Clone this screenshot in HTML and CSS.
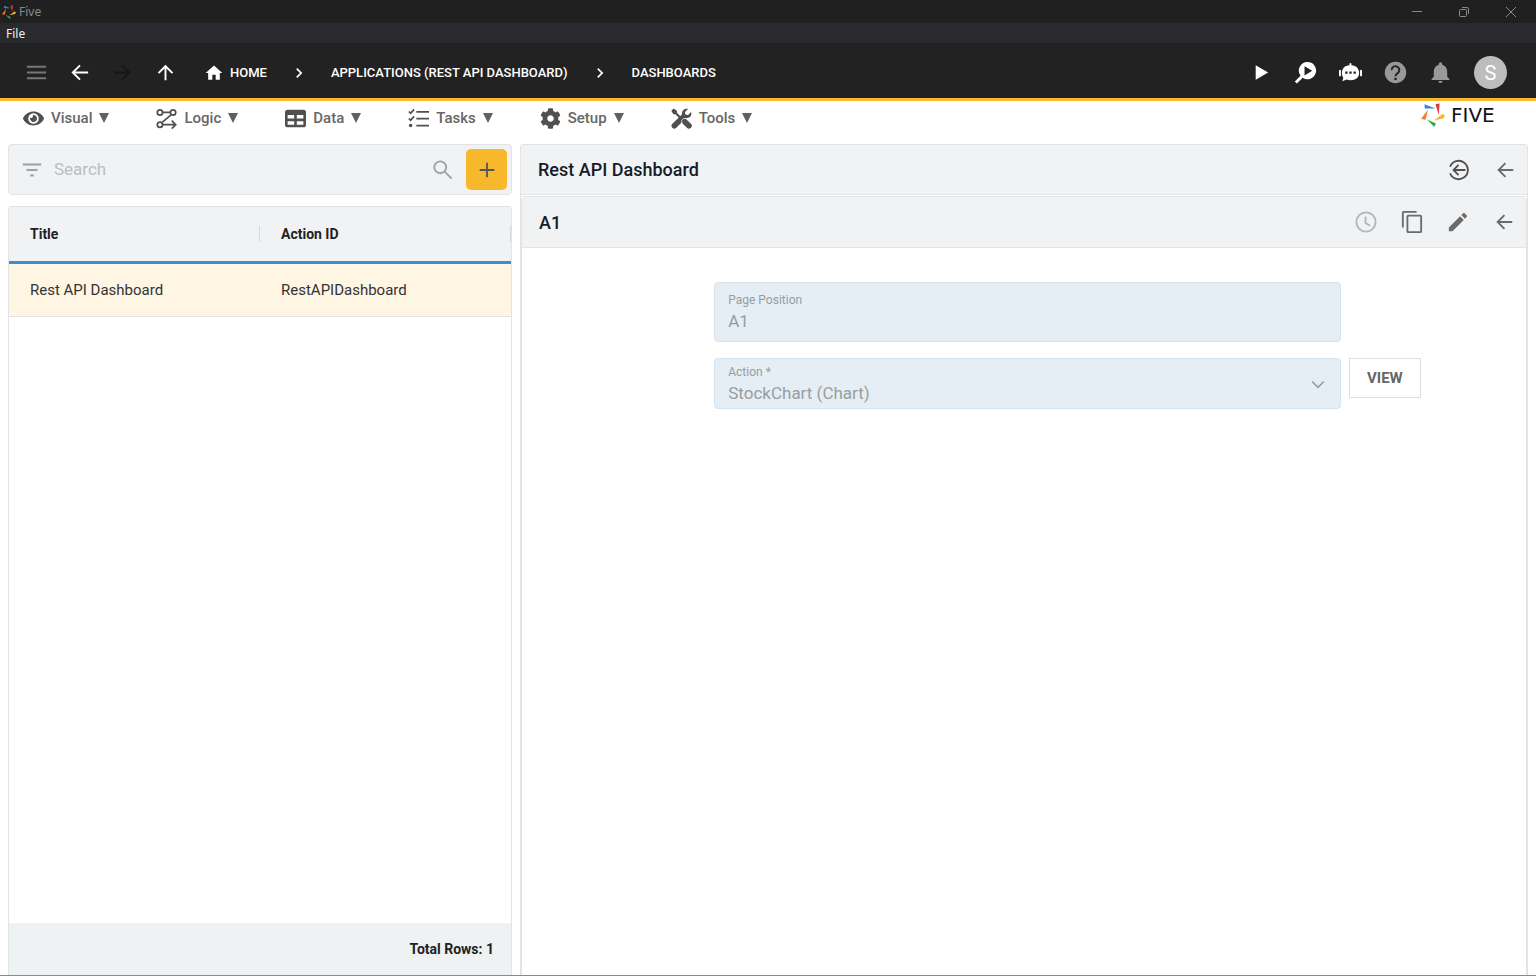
FILE: index.html
```
<!DOCTYPE html>
<html lang="en">
<head>
    <meta charset="UTF-8">
    <meta name="viewport" content="width=device-width, initial-scale=1.0">
    <title>Five</title>
    <link rel="stylesheet" href="styles.css">
</head>
<body>

<!-- Shared shapes -->
<svg class="sprite" aria-hidden="true">
    <symbol id="star" viewBox="0 0 24 24">
        <path fill="#3f83d9" d="M3.5 1.2 14.500 5.500H3.800z"/>
        <path fill="#e5343d" d="M14.500 1.200 18.600.4 17.800 12z"/>
        <path fill="#f8b62b" d="M24 12.500 22.200 15.500 12.800 17.500 21.500 11z"/>
        <path fill="#35a853" d="M6 16.500 15 20.500 13.200 24z"/>
        <path fill="#f47c2a" d="M7 6.500 4.500 16.800 0 16z"/>
    </symbol>
    <symbol id="arrow-left" viewBox="0 0 24 24">
        <path fill="none" stroke="currentColor" stroke-width="2" d="M21 12H5M12.500 4.500 5 12l7.500 7.500"/>
    </symbol>
</svg>

<!-- Window title -->
<div class="titlebar">
    <svg class="titlebar-logo"><use href="#star"/></svg>
    <span class="titlebar-name">Five</span>
    <div class="window-buttons">
        <button aria-label="Minimize"><svg viewBox="0 0 12 12"><path d="M1 5.500h10"/></svg></button>
        <button aria-label="Restore"><svg viewBox="0 0 12 12"><rect x="1.5" y="3.5" width="7" height="7" rx="1"/><path d="M4 1.500h5a1.500 1.500 0 0 1 1.500 1.500v5"/></svg></button>
        <button aria-label="Close"><svg viewBox="0 0 12 12"><path d="M1 1l10 10M11 1 1 11"/></svg></button>
    </div>
</div>
<div class="filebar"><button>File</button></div>

<!-- Main toolbar -->
<header class="toolbar">
    <div class="nav-buttons">
        <button class="dim" aria-label="Menu"><svg viewBox="0 0 24 24"><path d="M2 5h20v2H2zM2 11h20v2H2zM2 17h20v2H2z"/></svg></button>
        <button aria-label="Back"><svg><use href="#arrow-left"/></svg></button>
        <button class="off" aria-label="Forward" disabled><svg class="flip"><use href="#arrow-left"/></svg></button>
        <button aria-label="Up"><svg viewBox="0 0 24 24"><path d="M4 12l1.410 1.410L11 7.830V20h2V7.830l5.580 5.590L20 12l-8-8-8 8z"/></svg></button>
    </div>
    <nav class="breadcrumbs">
        <a href="#"><svg viewBox="0 0 24 24"><path d="M10 20v-6h4v6h5v-8h3L12 3 2 12h3v8z"/></svg>HOME</a>
        <svg class="sep" viewBox="0 0 24 24"><path d="M10 6 8.590 7.410 13.170 12l-4.580 4.590L10 18l6-6z"/></svg>
        <a href="#">APPLICATIONS (REST API DASHBOARD)</a>
        <svg class="sep" viewBox="0 0 24 24"><path d="M10 6 8.590 7.410 13.170 12l-4.580 4.590L10 18l6-6z"/></svg>
        <a href="#">DASHBOARDS</a>
    </nav>
    <div class="tool-buttons">
        <button aria-label="Run"><svg viewBox="0 0 24 24"><path d="M7 4.500v15L20 12z"/></svg></button>
        <button aria-label="Inspect"><svg viewBox="0 0 24 24"><path fill-rule="evenodd" d="M14 1a9 9 0 1 1-4.900 16.500L3 23.500.8 21.300l6-6A9 9 0 0 1 14 1zm-3 4.500v9.500l8-4.700z"/></svg></button>
        <button aria-label="Assistant"><svg viewBox="0 0 24 24"><path fill-rule="evenodd" d="M11 4.500V3a1 1 0 0 1 2 0v1.500c5 .2 8 3.500 8 8s-3.500 7.500-9 7.500c-1.500 0-2.800-.2-4-.7L3.500 21l1-3.500C3.500 16 3 14.500 3 12.500c0-4.500 3-7.800 8-8zM6.500 11v2.400h2.400V11zm4.300 0v2.400h2.400V11zm4.300 0v2.400h2.400V11z"/><rect y="9" width="2" height="7" rx="1"/><rect x="22" y="9" width="2" height="7" rx="1"/></svg></button>
        <button class="soft" aria-label="Help"><svg viewBox="0 0 24 24"><path d="M12 .8a11.200 11.200 0 1 0 0 22.400 11.200 11.200 0 0 0 0-22.400z"/><path class="mark" d="M8 9.500a4 4 0 1 1 6.500 3c-1.500 1.200-2.500 1.800-2.500 3.500"/><path class="dot" d="M10.800 17.500h2.400v2.400h-2.400z"/></svg></button>
        <button class="soft" aria-label="Notifications"><svg viewBox="0 0 24 24"><path d="M12 23a2.200 2.200 0 0 0 2.200-2.200H9.800A2.200 2.200 0 0 0 12 23zm7-6.500V11c0-3.400-1.900-6.200-5.200-7V3.200a1.800 1.800 0 0 0-3.600 0V4C6.900 4.800 5 7.600 5 11v5.500l-2.300 2.200v1.100h18.600v-1.100z"/></svg></button>
        <button class="avatar">S</button>
    </div>
</header>

<!-- Menu -->
<nav class="menu">
    <button><svg viewBox="0 0 576 512"><path d="M572.520 241.400C518.290 135.590 410.930 64 288 64S57.680 135.640 3.480 241.410a32.350 32.350 0 0 0 0 29.190C57.710 376.410 165.070 448 288 448s230.320-71.640 284.520-177.410a32.350 32.350 0 0 0 0-29.190zM288 400a144 144 0 1 1 144-144 143.930 143.930 0 0 1-144 144zm0-240a95.310 95.310 0 0 0-25.310 3.790 47.850 47.850 0 0 1-66.900 66.900A95.780 95.780 0 1 0 288 160z"/></svg>Visual<i></i></button>
    <button><svg class="line" viewBox="0 0 24 24"><circle cx="4.500" cy="5" r="3"/><circle cx="19.500" cy="5" r="3"/><circle cx="4.500" cy="19" r="3"/><path d="M7.500 5h9M17.500 7.500 7 16.500M7.500 19H22M18 14.500l4.500 4.500-4.500 4.500"/></svg>Logic<i></i></button>
    <button><svg viewBox="0 0 24 24"><path fill-rule="evenodd" d="M3 2h18a3 3 0 0 1 3 3v14a3 3 0 0 1-3 3H3a3 3 0 0 1-3-3V5a3 3 0 0 1 3-3zm0 6v4h7.500V8zm10.500 0v4H21V8zM3 15v4h7.500v-4zm10.500 0v4H21v-4z"/></svg>Data<i></i></button>
    <button><svg class="line" viewBox="0 0 24 24"><path d="M9.500 4.500H24M9.500 12H24M9.500 20H24M1 4l2 2 4-4.500M1 12l2 2 4-4.500"/><circle class="dot" cx="3" cy="20" r="2"/></svg>Tasks<i></i></button>
    <button><svg viewBox="0 0 512 512"><path d="M487.400 315.700l-42.600-24.600c4.300-23.200 4.300-47 0-70.200l42.600-24.600c4.900-2.800 7.100-8.600 5.500-14-11.100-35.600-30-67.800-54.700-94.600-3.800-4.100-10-5.100-14.800-2.300L380.800 110c-17.900-15.400-38.500-27.300-60.800-35.100V25.800c0-5.600-3.900-10.500-9.400-11.700-36.700-8.200-74.300-7.800-109.200 0-5.500 1.200-9.400 6.100-9.400 11.700V75c-22.200 7.900-42.800 19.800-60.800 35.100L88.700 85.500c-4.900-2.800-11-1.900-14.800 2.300-24.700 26.700-43.600 58.900-54.700 94.600-1.700 5.400.6 11.200 5.500 14L67.300 221c-4.300 23.200-4.300 47 0 70.200l-42.600 24.600c-4.900 2.800-7.100 8.600-5.500 14 11.100 35.600 30 67.800 54.700 94.600 3.800 4.100 10 5.100 14.800 2.300l42.600-24.600c17.900 15.400 38.500 27.300 60.800 35.100v49.200c0 5.600 3.900 10.500 9.400 11.700 36.700 8.200 74.300 7.800 109.200 0 5.500-1.200 9.400-6.100 9.400-11.700v-49.200c22.200-7.900 42.800-19.800 60.800-35.100l42.600 24.600c4.900 2.800 11 1.900 14.800-2.300 24.700-26.700 43.600-58.900 54.700-94.600 1.500-5.500-.7-11.300-5.600-14.100zM256 336c-44.100 0-80-35.900-80-80s35.900-80 80-80 80 35.900 80 80-35.900 80-80 80z"/></svg>Setup<i></i></button>
    <button><svg viewBox="0 0 24 24"><path d="M3 .5 6.800 3v2.500l4.700 4.700-1.800 1.800L5 7.200H2.700L.3 3.200z"/><path d="M13.500 13c1.800-1 3.500-.7 4.800.6l4.500 4.500a3 3 0 0 1-4.600 4.600l-4.500-4.500c-1-1-1.400-2.500-.9-4z"/><path d="M22.900 4.500 19.500 8l-3-.5-.5-3L19.500 1C16 0 12 2.500 12.500 7.500L1.300 18.300a3.200 3.200 0 0 0 4.500 4.500l6-6c-.2-2.500 1-5 4.200-5.300 5 .8 8.500-2.500 6.900-7z"/></svg>Tools<i></i></button>
    <div class="brand"><svg><use href="#star"/></svg><span>FIVE</span></div>
</nav>

<main class="content">
    <!-- Record list -->
    <section class="list">
        <form class="search">
            <svg viewBox="0 0 24 24"><path d="M2 5h20v2H2zM6 11h12v2H6zM10 17h4v2h-4z"/></svg>
            <input type="text" placeholder="Search" aria-label="Search">
            <svg class="line" viewBox="0 0 24 24"><circle cx="9" cy="9" r="6.500"/><path d="M14 14l7.500 7.500"/></svg>
            <button type="button" class="add" aria-label="Add"><svg viewBox="0 0 24 24"><path d="M11 4h2v7h7v2h-7v7h-2v-7H4v-2h7z"/></svg></button>
        </form>
        <div class="records">
            <table>
                <thead>
                    <tr><th><span>Title</span></th><th><span>Action ID</span></th></tr>
                </thead>
                <tbody>
                    <tr><td>Rest API Dashboard</td><td>RestAPIDashboard</td></tr>
                </tbody>
            </table>
            <div class="total">Total Rows: 1</div>
        </div>
    </section>

    <!-- Record detail -->
    <section class="detail">
        <div class="bar">
            <h1>Rest API Dashboard</h1>
            <button class="dark" aria-label="Exit"><svg class="line" viewBox="0 0 24 24"><path d="M2.300 8.500a10 10 0 1 1 0 7M19 12H6M11.500 6.500 6 12l5.500 5.500"/></svg></button>
            <button aria-label="Back"><svg><use href="#arrow-left"/></svg></button>
        </div>
        <div class="page">
            <div class="bar">
                <h2>A1</h2>
                <button disabled aria-label="History"><svg class="line" viewBox="0 0 24 24"><circle cx="12" cy="12" r="10.500"/><path d="M11.500 6v7l5 3"/></svg></button>
                <button aria-label="Copy"><svg class="line" viewBox="0 0 24 24"><path d="M2 18V2q0-1 1-1h14"/><rect x="7" y="5" width="15" height="18" rx="1"/></svg></button>
                <button aria-label="Edit"><svg viewBox="0 0 24 24"><path d="M2 18v4h4L18.300 9.700l-4-4zM21.600 6.400a1.200 1.200 0 0 0 0-1.600l-2.400-2.400a1.200 1.200 0 0 0-1.600 0l-2 2 4 4z"/></svg></button>
                <button aria-label="Back"><svg><use href="#arrow-left"/></svg></button>
            </div>
            <form class="fields">
                <div class="field tall">
                    <label for="position">Page Position</label>
                    <input id="position" type="text" value="A1" disabled>
                </div>
                <div class="field">
                    <label for="action">Action *</label>
                    <select id="action" disabled><option>StockChart (Chart)</option></select>
                    <svg class="line" viewBox="0 0 24 24"><path d="M5 9l7 7 7-7"/></svg>
                </div>
                <button type="button" class="view">VIEW</button>
            </form>
        </div>
    </section>
</main>

</body>
</html>
```
FILE: styles.css
```
* {
    box-sizing: border-box;
}
body {
    margin: 0;
    min-height: 100vh;
    display: flex;
    flex-direction: column;
    font-family: Roboto, sans-serif;
    font-size: 15px;
    color: #222;
    background-color: #fff;
    border-bottom: 1px solid #8a8a8a;
}
button {
    display: flex;
    align-items: center;
    justify-content: center;
    padding: 0;
    border: none;
    background: none;
    font: inherit;
    color: inherit;
    cursor: pointer;
}
svg {
    width: 24px;
    height: 24px;
    fill: currentColor;
    flex-shrink: 0;
}
.line {
    fill: none;
    stroke: currentColor;
    stroke-width: 2;
}
.sprite {
    display: none;
}

/* Window bars */
.titlebar {
    display: flex;
    align-items: center;
    height: 23px;
    padding: 0 2px;
    background-color: #202020;
    color: #8a8a8a;
    font-family: "Noto Sans", sans-serif;
    font-size: 12px;
}
.titlebar-logo {
    width: 14px;
    height: 14px;
}
.titlebar-name {
    margin-left: 3px;
}
.window-buttons {
    display: flex;
    margin-left: auto;
}
.window-buttons button {
    width: 47px;
}
.window-buttons svg {
    width: 12px;
    height: 12px;
    fill: none;
    stroke: #8a8a8a;
}
.filebar {
    display: flex;
    align-items: center;
    height: 20px;
    padding-left: 6px;
    background-color: #292a2d;
    color: #eee;
    font-family: "Noto Sans", sans-serif;
    font-size: 12px;
}

/* Toolbar */
.toolbar {
    display: flex;
    align-items: center;
    height: 58px;
    padding: 4px 29px 0 25px;
    border-bottom: 3px solid #f7b92b;
    background-color: #222;
    color: #fff;
}
.nav-buttons {
    display: flex;
    gap: 20px;
}
.nav-buttons svg {
    width: 23px;
    height: 23px;
}
.nav-buttons .dim {
    color: #777;
}
.nav-buttons .off {
    color: #151515;
}
.flip {
    transform: rotate(180deg);
}
.breadcrumbs {
    display: flex;
    align-items: center;
    margin-left: 27px;
    font-size: 13px;
    font-weight: 500;
}
.breadcrumbs a {
    display: flex;
    align-items: center;
    color: #fff;
    text-decoration: none;
}
.breadcrumbs a svg {
    width: 20px;
    margin-right: 6px;
}
.breadcrumbs .sep {
    width: 20px;
    height: 20px;
    margin: 0 22px;
}
.tool-buttons {
    display: flex;
    align-items: center;
    gap: 22px;
    margin-left: auto;
}
.tool-buttons svg {
    width: 23px;
    height: 23px;
}
.tool-buttons .soft {
    color: #999;
}
.mark {
    fill: none;
    stroke: #222;
    stroke-width: 2;
}
.toolbar .dot {
    fill: #222;
}
.tool-buttons .avatar {
    width: 33px;
    height: 33px;
    border-radius: 50%;
    background-color: #bdbdbd;
    font-size: 20px;
}

/* Menu */
.menu {
    display: flex;
    align-items: flex-start;
    gap: 47px;
    height: 43px;
    padding: 5px 25px 0 23px;
    color: #666;
    font-weight: 500;
}
.menu button {
    height: 24px;
}
.menu button svg {
    width: 21px;
    height: 21px;
    margin-right: 7px;
    color: #505050;
}
.menu .dot {
    fill: currentColor;
    stroke: none;
}
.menu i {
    margin-left: 7px;
    border: 5px solid transparent;
    border-top: 10px solid #606060;
    border-bottom: none;
}
.brand {
    display: flex;
    align-items: center;
    height: 17px;
    margin-left: auto;
    color: #111;
    font-family: "DejaVu Sans", sans-serif;
    font-size: 20px;
    font-weight: 400;
}
.brand svg {
    margin-right: 6px;
}
.brand span {
    width: 60px;
}

/* Content */
.content {
    flex: 1;
    display: grid;
    grid-template-columns: 1fr 2fr;
    gap: 8px;
    padding: 0 8px;
}
.list {
    display: flex;
    flex-direction: column;
    gap: 11px;
}
.search {
    display: flex;
    align-items: center;
    height: 51px;
    padding: 0 4px 0 12px;
    border: 1px solid #e2e3e4;
    border-radius: 4px;
    background-color: #f1f2f4;
    color: #9aa1a5;
}
.search svg {
    width: 22px;
}
.search input {
    flex: 1;
    min-width: 0;
    margin-left: 11px;
    padding: 0 0 2px;
    border: none;
    outline: none;
    background: none;
    font: inherit;
    font-size: 17px;
}
.search input::placeholder {
    color: #bbbdbf;
}
.add {
    width: 41px;
    height: 41px;
    margin-left: 12px;
    border-radius: 5px;
    background-color: #f7b92b;
}
.search .add {
    color: #555;
}
.records {
    flex: 1;
    display: flex;
    flex-direction: column;
    border: 1px solid #e2e3e4;
    border-bottom: none;
    border-radius: 4px 4px 0 0;
    overflow: hidden;
}
table {
    width: 100%;
    table-layout: fixed;
    border-collapse: collapse;
    text-align: left;
}
th {
    height: 55px;
    padding: 0;
    border-bottom: 3px solid #4488d8;
    background-color: #f1f2f4;
    font-size: 14px;
    font-weight: 700;
}
th span {
    display: block;
    padding-left: 21px;
    border-right: 1px solid #d8d9da;
}
td {
    height: 54px;
    padding: 0 0 0 21px;
    border-bottom: 1px solid #e2e3e4;
    background-color: #fff5e3;
    color: #333;
}
.total {
    height: 52px;
    margin-top: auto;
    padding-right: 17px;
    background-color: #eef2f3;
    font-size: 14px;
    font-weight: 700;
    line-height: 52px;
    text-align: right;
}

/* Detail */
.detail {
    display: flex;
    flex-direction: column;
    border: 1px solid #e2e3e4;
    border-bottom: none;
    border-radius: 4px 4px 0 0;
}
.bar {
    display: flex;
    align-items: center;
    gap: 24px;
    height: 50px;
    padding: 0 11px 0 17px;
    border-bottom: 1px solid #e2e3e4;
    background-color: #f1f2f4;
    color: #6a6a6a;
}
.page .bar {
    height: 51px;
}
.bar h1,
.bar h2 {
    margin: 0 auto 0 0;
    color: #151c28;
    font-size: 18px;
    font-weight: 500;
}
.bar button:disabled {
    color: #b5b5b5;
}
.bar .dark {
    color: #505050;
}
.bar svg {
    width: 22px;
}
.page {
    flex: 1;
    margin-top: 1px;
    border: 1px solid #e2e3e4;
    border-bottom: none;
    border-radius: 4px 4px 0 0;
}
.fields {
    display: grid;
    grid-template-columns: 27fr 88fr 26fr;
    row-gap: 16px;
    align-items: start;
    padding-top: 34px;
}
.field {
    grid-column: 2;
    display: grid;
    grid-template-columns: 1fr auto;
    height: 51px;
    padding: 4px 12px 0 13px;
    border: 1px solid #d5e2f0;
    border-radius: 4px;
    background-color: #e5edf5;
    color: #999da1;
    align-content: start;
}
.field.tall {
    height: 60px;
    padding-top: 8px;
}
.field label {
    grid-column: 1;
    font-size: 12px;
    line-height: 18px;
}
.field input,
.field select {
    grid-column: 1;
    width: 100%;
    height: 24px;
    padding: 0;
    border: none;
    appearance: none;
    background: none;
    font: inherit;
    font-size: 17px;
    color: inherit;
    opacity: 1;
}
.field svg {
    grid-column: 2;
    grid-row: 1 / span 2;
    width: 20px;
    align-self: center;
}
.view {
    grid-column: 3;
    width: 72px;
    height: 40px;
    margin-left: 8px;
    border: 1px solid #ddd;
    color: #666;
    font-size: 15px;
    font-weight: 700;
}
```
